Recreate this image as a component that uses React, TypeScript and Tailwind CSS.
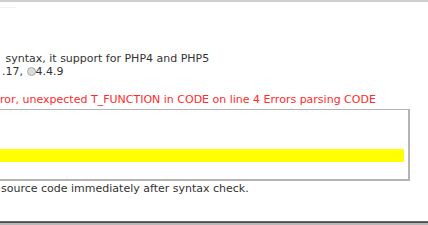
export default function App() {
  return (
    <div className="relative h-[225px] w-[428px] overflow-hidden bg-white font-['DejaVu_Sans',Verdana,sans-serif] text-[11px] leading-[13px]">
      <div className="h-[2px] w-full bg-[#cfcfcf]" />
      <div className="ml-0 mt-[5px] h-px w-[16px] bg-[#f2f2f2]" />

      <div className="mt-[44px] pl-[2px] text-[#333333]">
        <p className="whitespace-pre"> syntax, it support for PHP4 and PHP5</p>
        <p className="flex items-center whitespace-pre">
          <span>.17, </span>
          <span className="inline-block h-[9px] w-[9px] rounded-full border border-[#a9a9a9] bg-[#dcdcdc]" />
          <span>4.4.9</span>
        </p>
      </div>

      <p className="mt-[15px] whitespace-pre text-[#ff2a2a]">
        ror, unexpected T_FUNCTION in CODE on line 4 Errors parsing CODE
      </p>

      <div className="mt-[3px] h-[72px] w-[410px] border-r-2 border-b-2 border-t border-[#b4b4b4] bg-white pt-[39px]">
        <div className="h-[13px] w-[404px] bg-[#ffff00]" />
      </div>

      <p className="mt-[1px] whitespace-pre pl-px text-[#333333]">
        source code immediately after syntax check.
      </p>

      <div className="absolute bottom-0 left-0 w-full">
        <div className="h-px w-full bg-[#6a6a6a]" />
        <div className="h-px w-full bg-[#4a4a4a]" />
        <div className="h-[2px] w-full bg-[#b8b8b8]" />
      </div>
    </div>
  );
}
